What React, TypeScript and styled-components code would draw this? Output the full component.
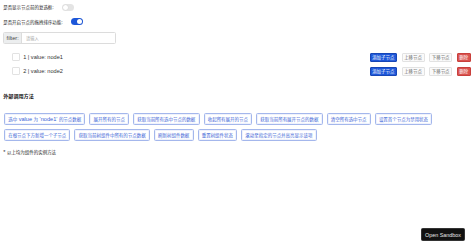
import styled, { createGlobalStyle } from "styled-components";

const GlobalStyle = createGlobalStyle`
  body {
    margin: 3.2px;
    font-family: "Liberation Sans", Arial, "Noto Sans CJK SC", sans-serif;
    font-size: 5.6px;
    color: #222;
    background: #fff;
  }
`;

// CJK runs are kept a touch smaller so they take the width they have in the shot
const Cjk = styled.span`
  font-family: "Noto Sans CJK SC", sans-serif;
  font-size: 0.8em;
`;

const OptionRow = styled.div`
  display: flex;
  align-items: center;
  height: 8px;
  margin-bottom: 6.5px;
`;

const Toggle = styled.span<{ $on?: boolean }>`
  position: relative;
  display: inline-block;
  width: 12px;
  height: 7px;
  margin-left: 8px;
  border-radius: 4px;
  background: ${(p) => (p.$on ? "#1d57d9" : "#e4e4e4")};

  &::after {
    content: "";
    position: absolute;
    top: 1px;
    left: ${(p) => (p.$on ? "6px" : "1px")};
    width: 5px;
    height: 5px;
    border-radius: 50%;
    background: #fff;
    box-shadow: 0 0 1px rgba(0, 0, 0, 0.2);
  }
`;

const FilterGroup = styled.div`
  display: flex;
  width: 113px;
  height: 12px;
  margin-top: 6.8px;
  border: 0.5px solid #dcdcdc;
  border-radius: 1.5px;
  box-sizing: border-box;
  overflow: hidden;
`;

const Addon = styled.span`
  display: flex;
  align-items: center;
  padding: 0 2.4px;
  background: #eceeef;
  border-right: 0.5px solid #dcdcdc;
  color: #444;
`;

const FilterInput = styled.input`
  flex: 1;
  min-width: 0;
  border: none;
  outline: none;
  padding: 0 4px;
  font-family: "Noto Sans CJK SC", sans-serif;
  font-size: 4.2px;
  background: #fff;

  &::placeholder {
    color: #aaa;
  }
`;

const Tree = styled.div`
  margin-top: 6px;
`;

const TreeRow = styled.div`
  display: flex;
  align-items: center;
  height: 14px;
  padding-left: 9px;
`;

const Check = styled.span`
  width: 6px;
  height: 6px;
  border: 0.5px solid #e2e2e2;
  border-radius: 1px;
  background: #fff;
`;

const NodeLabel = styled.span`
  margin-left: 3px;
  color: #333;
`;

const Actions = styled.div`
  display: flex;
  gap: 4.5px;
  margin-left: auto;
`;

const tone = {
  primary: { bg: "#1d57d9", border: "#1746b5", color: "#fff" },
  light: { bg: "#fafafa", border: "#e2e2e2", color: "#666" },
  danger: { bg: "#d9534f", border: "#c9403c", color: "#fff" },
};

const RowButton = styled.button<{ $tone: keyof typeof tone }>`
  height: 9px;
  padding: 0 1.6px;
  border: 0.5px solid ${(p) => tone[p.$tone].border};
  border-radius: 1px;
  background: ${(p) => tone[p.$tone].bg};
  color: ${(p) => tone[p.$tone].color};
  font-family: inherit;
  font-size: 5.6px;
  line-height: 1;
`;

const Heading = styled.h3`
  margin: 14px 0 0;
  font-size: 6.4px;
  font-weight: bold;
  color: #111;
`;

const TagList = styled.div`
  display: flex;
  flex-wrap: wrap;
  gap: 4px;
  margin-top: 14px;
  padding-left: 0.8px;
`;

const Tag = styled.button`
  height: 12px;
  padding: 0 3.2px;
  border: 0.8px solid #a4b7ec;
  border-radius: 1.5px;
  background: #fff;
  color: #3862d6;
  font-family: inherit;
  font-size: 5.6px;
  line-height: 1;
  box-shadow: inset 0 0 0 0.5px #dfe6fa;
`;

const Note = styled.p`
  margin: 8px 0 0;
  color: #222;
`;

const SandboxButton = styled.button`
  position: fixed;
  right: 9px;
  bottom: 7px;
  width: 44px;
  height: 13px;
  padding: 0;
  border: 0.5px solid #333;
  border-radius: 1.5px;
  background: #111;
  color: #e8e8e8;
  font-family: inherit;
  font-size: 5.4px;
`;

const nodes = ["node1", "node2"];

const methods = [
  <>
    <Cjk>选中</Cjk> value <Cjk>为</Cjk> 'node1' <Cjk>的节点数据</Cjk>
  </>,
  <Cjk>展开所有的节点</Cjk>,
  <Cjk>获取当前所有选中节点的数据</Cjk>,
  <Cjk>收起所有展开的节点</Cjk>,
  <Cjk>获取当前所有展开节点的数据</Cjk>,
  <Cjk>清空所有选中节点</Cjk>,
  <Cjk>设置首个节点为禁用状态</Cjk>,
  <Cjk>在根节点下方新增一个子节点</Cjk>,
  <Cjk>获取当前树组件中所有的节点数据</Cjk>,
  <Cjk>刷新树组件数据</Cjk>,
  <Cjk>重置树组件状态</Cjk>,
  <Cjk>滚动至指定的节点并高亮显示该项</Cjk>,
];

export default function App() {
  return (
    <>
      <GlobalStyle />
      <OptionRow>
        <Cjk>是否显示节点前的复选框</Cjk>:
        <Toggle />
      </OptionRow>
      <OptionRow>
        <Cjk>是否开启节点的拖拽排序功能</Cjk>:
        <Toggle $on />
      </OptionRow>
      <FilterGroup>
        <Addon>filter:</Addon>
        <FilterInput placeholder="请输入" />
      </FilterGroup>
      <Tree>
        {nodes.map((value, i) => (
          <TreeRow key={value}>
            <Check />
            <NodeLabel>
              {i + 1} | value: {value}
            </NodeLabel>
            <Actions>
              <RowButton $tone="primary">
                <Cjk>添加子节点</Cjk>
              </RowButton>
              <RowButton $tone="light">
                <Cjk>上移节点</Cjk>
              </RowButton>
              <RowButton $tone="light">
                <Cjk>下移节点</Cjk>
              </RowButton>
              <RowButton $tone="danger">
                <Cjk>删除</Cjk>
              </RowButton>
            </Actions>
          </TreeRow>
        ))}
      </Tree>
      <Heading>
        <Cjk>外部调用方法</Cjk>
      </Heading>
      <TagList>
        {methods.map((label, i) => (
          <Tag key={i}>{label}</Tag>
        ))}
      </TagList>
      <Note>
        * <Cjk>以上均为组件的实例方法</Cjk>
      </Note>
      <SandboxButton>Open Sandbox</SandboxButton>
    </>
  );
}
